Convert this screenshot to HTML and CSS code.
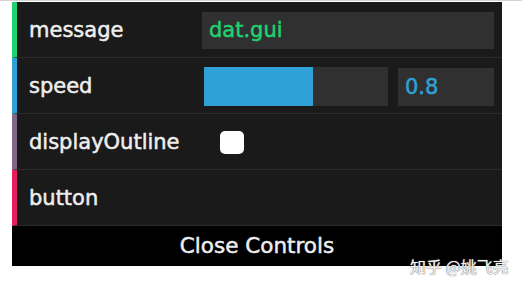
FILE: index.html
```html
<!DOCTYPE html>
<html>
<head>
<meta charset="utf-8">
<link rel="stylesheet" href="styles.css">
</head>
<body>
<div class="topline"></div>
<div class="gui">
  <div class="row string">
    <span class="label">message</span>
    <div class="control"><div class="text-input">dat.gui</div></div>
  </div>
  <div class="row number">
    <span class="label">speed</span>
    <div class="control slider-wrap">
      <div class="slider"><div class="fill" style="width:59%"></div></div>
      <div class="num-input">0.8</div>
    </div>
  </div>
  <div class="row boolean">
    <span class="label">displayOutline</span>
    <div class="control"><div class="checkbox"></div></div>
  </div>
  <div class="row function">
    <span class="label">button</span>
  </div>
  <div class="close">Close Controls</div>
</div>
<div class="watermark">知乎 @姚飞亮</div>
</body>
</html>
```
FILE: styles.css
```css
html, body {
  margin: 0;
  padding: 0;
  background: #ffffff;
}
body {
  position: relative;
  width: 522px;
  height: 288px;
  overflow: hidden;
  font-family: "DejaVu Sans", "Liberation Sans", sans-serif;
}
.topline {
  height: 1px;
  background: #d4d4d4;
  margin-bottom: 1px;
}
.gui {
  margin-left: 12px;
  width: 490px;
  background: #1a1a1a;
}
.row {
  display: flex;
  align-items: center;
  height: 55px;
  border-left: 5px solid #1ed36f;
  border-bottom: 1px solid #2c2c2c;
  box-sizing: content-box;
}
.row.number { border-left-color: #2fa1d6; }
.row.boolean { border-left-color: #806787; }
.row.function { border-left-color: #e61d5f; }
.label {
  width: 173px;
  padding-left: 12px;
  color: #eeeeee;
  font-size: 21px;
  white-space: nowrap;
  -webkit-text-stroke: 0.5px currentColor;
}
.control {
  flex: 1;
  display: flex;
  align-items: center;
  padding-right: 8px;
}
.text-input {
  flex: 1;
  height: 37px;
  margin-top: 2px;
  background: #303030;
  color: #1ed36f;
  font-size: 21px;
  line-height: 37px;
  padding-left: 7px;
  -webkit-text-stroke: 0.5px currentColor;
}
.slider-wrap {
  gap: 10px;
}
.slider {
  margin-left: 2px;
  width: 184px;
  height: 39px;
  background: #303030;
  margin-top: 2px;
}
.fill {
  height: 100%;
  background: #2fa1d6;
}
.num-input {
  flex: 1;
  height: 38px;
  margin-top: 3px;
  background: #303030;
  color: #2fa1d6;
  font-size: 21px;
  line-height: 38px;
  padding-left: 7px;
  -webkit-text-stroke: 0.5px currentColor;
}
.checkbox {
  margin-left: 18px;
  margin-top: 2px;
  width: 24px;
  height: 23px;
  border-radius: 5px;
  background: #ffffff;
}
.close {
  height: 40px;
  background: #000000;
  color: #eeeeee;
  font-size: 21.5px;
  line-height: 40px;
  text-align: center;
  -webkit-text-stroke: 0.5px currentColor;
}
.watermark {
  position: absolute;
  left: 410px;
  top: 254px;
  font-family: "Noto Sans CJK SC", sans-serif;
  font-size: 16px;
  color: #f4f4f4;
  text-shadow: 0 0 1px #777, 0 0 1px #777;
  white-space: nowrap;
}
```
